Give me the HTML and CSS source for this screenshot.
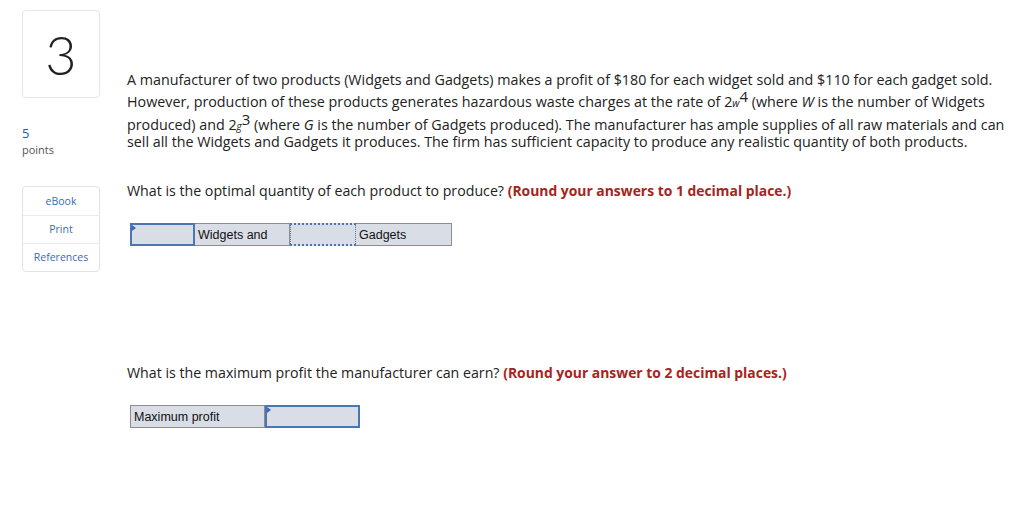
FILE: index.html
```html
<!DOCTYPE html>
<html>
<head>
<meta charset="utf-8">
<link rel="stylesheet" href="styles.css">
</head>
<body>
<div class="page">
  <aside class="side">
    <div class="qnum">3</div>
    <div class="points"><span class="pval">5</span><span class="plabel">points</span></div>
    <nav class="tools">
      <div class="tool">eBook</div>
      <div class="tool">Print</div>
      <div class="tool">References</div>
    </nav>
  </aside>
  <main class="main">
    <p class="stem">A manufacturer of two products (Widgets and Gadgets) makes a profit of $180 for each widget sold and $110 for each gadget sold. However, production of these products generates hazardous waste charges at the rate of 2<span class="var">w</span><sup>4</sup> (where <i>W</i> is the number of Widgets produced) and 2<span class="var">g</span><sup>3</sup> (where <i>G</i> is the number of Gadgets produced). The manufacturer has ample supplies of all raw materials and can sell all the Widgets and Gadgets it produces. The firm has sufficient capacity to produce any realistic quantity of both products.</p>
    <p class="q q1">What is the optimal quantity of each product to produce? <b class="hint">(Round your answers to 1 decimal place.)</b></p>
    <div class="grid g1">
      <div class="cell input w1"><span class="flag"></span></div>
      <div class="cell label w2">Widgets and</div>
      <div class="cell dotted w3"></div>
      <div class="cell label w4">Gadgets</div>
    </div>
    <p class="q q2">What is the maximum profit the manufacturer can earn? <b class="hint">(Round your answer to 2 decimal places.)</b></p>
    <div class="grid g2">
      <div class="cell label m1">Maximum profit</div>
      <div class="cell input m2"><span class="flag"></span></div>
    </div>
  </main>
</div>
</body>
</html>
```
FILE: styles.css
```css
html, body { margin: 0; padding: 0; background: #fff; }
body { font-family: "Open Sans", "Liberation Sans", sans-serif; color: #222; }
.page { display: flex; padding: 10px 0 0 22px; }
.side { width: 78px; flex: none; display: flex; flex-direction: column; }
.qnum {
  height: 86px; border: 1px solid #e6e6e6; border-radius: 4px;
  display: flex; align-items: center; justify-content: center;
  font-family: "Lato", sans-serif; font-weight: 300; font-size: 54px; color: #222;
}
.points { margin-top: 27px; display: flex; flex-direction: column; }
.pval { font-size: 13px; color: #2a5aa0; line-height: 17px; }
.plabel { font-size: 11px; color: #555; line-height: 16px; }
.tools { margin-top: 28px; border: 1px solid #e3e3e3; border-radius: 4px; }
.tool { font-size: 10.5px; color: #3a6ab8; text-align: center; line-height: 26px; height: 27px; border-top: 1px solid #ececec; }
.tool:first-child { border-top: none; height: 28px; line-height: 28px; }
.main { margin-left: 27px; padding-top: 62px; width: 885px; }
.stem { margin: 0; font-size: 14.3px; line-height: 16px; color: #222; }
.stem sup { font-size: 15px; line-height: 16px; vertical-align: 5px; }
.var { font-size: 10px; font-style: italic; }
.stem i { font-size: 14.5px; }
.q { margin: 0; font-size: 14.2px; line-height: 18px; }
.q .hint { font-size: 13.9px; }
.q1 { margin-top: 32px; }
.q2 { margin-top: 118px; }
.hint { color: #a82320; font-weight: 700; }
.grid { display: flex; margin-left: 3px; font-family: "Liberation Sans", Arial, sans-serif; font-size: 12.5px; color: #111; }
.g1 { margin-top: 23px; }
.g2 { margin-top: 23px; }
.cell { height: 23px; box-sizing: border-box; background: #d9dde6; display: flex; align-items: center; position: relative; }
.label { border: 1px solid #8c8c8c; padding-left: 3px; }
.input { border: 2px solid #4a76b4; }
.dotted { border: 1px dotted #4a76b4; border-width: 2px 1px; }
.flag { position: absolute; left: 0; top: 0; width: 0; height: 0; border-left: 4px solid #3a6ab8; border-top: 3px solid transparent; border-bottom: 3px solid transparent; }
.w1 { width: 65px; }
.w2 { width: 95px; border-left: none; }
.w3 { width: 66px; border-left-width: 1px; }
.w4 { width: 96px; border-left: none; }
.m1 { width: 135px; }
.m2 { width: 95px; }
```
